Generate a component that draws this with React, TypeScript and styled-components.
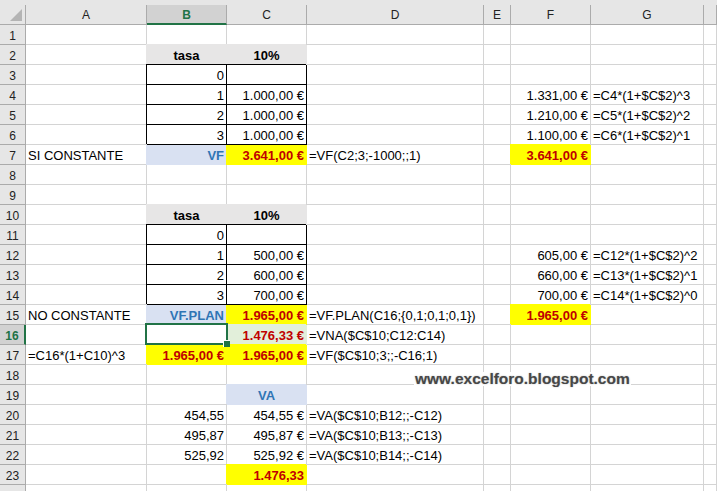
import React from 'react';
import styled, { createGlobalStyle } from 'styled-components';

const GlobalStyle = createGlobalStyle`
  html, body { margin: 0; padding: 0; overflow: hidden; background: #fff; }
  body { font-family: "Liberation Sans", Arial, sans-serif; }
`;

const BLUE = '#2f75b5';
const RED = '#c00000';
const YEL = '#ffff00';
const LB = '#d9e1f2';
const GR = '#e7e6e6';
const GN = '#e2efda';
const GREEN = '#217346';
const GRID = '#d4d4d4';
const HEAD_LINE = '#ababab';

type Col = 'A' | 'B' | 'C' | 'D' | 'E' | 'F' | 'G' | 'H';
const COLS: Col[] = ['A', 'B', 'C', 'D', 'E', 'F', 'G', 'H'];

type CellDef = {
  t: string;
  a?: 'left' | 'center' | 'right';
  b?: boolean;
  c?: string;
  bg?: string;
  box?: boolean;
};

const num = (t: string, box = false): CellDef => ({ t, a: 'right', box });
const txt = (t: string): CellDef => ({ t });
const hot = (t: string, bg: string): CellDef => ({ t, a: 'right', b: true, c: RED, bg });
const label = (t: string, a: 'right' | 'center' = 'right'): CellDef => ({ t, a, b: true, c: BLUE, bg: LB });
const head = (t: string): CellDef => ({ t, a: 'center', b: true, bg: GR });

const DATA: Record<number, Partial<Record<Col, CellDef>>> = {
  2: { B: head('tasa'), C: head('10%') },
  3: { B: num('0', true), C: num('', true) },
  4: { B: num('1', true), C: num('1.000,00 €', true), F: num('1.331,00 €'), G: txt('=C4*(1+$C$2)^3') },
  5: { B: num('2', true), C: num('1.000,00 €', true), F: num('1.210,00 €'), G: txt('=C5*(1+$C$2)^2') },
  6: { B: num('3', true), C: num('1.000,00 €', true), F: num('1.100,00 €'), G: txt('=C6*(1+$C$2)^1') },
  7: {
    A: txt('SI CONSTANTE'),
    B: label('VF'),
    C: hot('3.641,00 €', YEL),
    D: txt('=VF(C2;3;-1000;;1)'),
    F: hot('3.641,00 €', YEL),
  },
  10: { B: head('tasa'), C: head('10%') },
  11: { B: num('0', true), C: num('', true) },
  12: { B: num('1', true), C: num('500,00 €', true), F: num('605,00 €'), G: txt('=C12*(1+$C$2)^2') },
  13: { B: num('2', true), C: num('600,00 €', true), F: num('660,00 €'), G: txt('=C13*(1+$C$2)^1') },
  14: { B: num('3', true), C: num('700,00 €', true), F: num('700,00 €'), G: txt('=C14*(1+$C$2)^0') },
  15: {
    A: txt('NO CONSTANTE'),
    B: label('VF.PLAN'),
    C: hot('1.965,00 €', YEL),
    D: txt('=VF.PLAN(C16;{0,1;0,1;0,1})'),
    F: hot('1.965,00 €', YEL),
  },
  16: { C: hot('1.476,33 €', GN), D: txt('=VNA($C$10;C12:C14)') },
  17: {
    A: txt('=C16*(1+C10)^3'),
    B: hot('1.965,00 €', YEL),
    C: hot('1.965,00 €', YEL),
    D: txt('=VF($C$10;3;;-C16;1)'),
  },
  19: { C: label('VA', 'center') },
  20: { B: num('454,55'), C: num('454,55 €'), D: txt('=VA($C$10;B12;;-C12)') },
  21: { B: num('495,87'), C: num('495,87 €'), D: txt('=VA($C$10;B13;;-C13)') },
  22: { B: num('525,92'), C: num('525,92 €'), D: txt('=VA($C$10;B14;;-C14)') },
  23: { C: hot('1.476,33', YEL) },
};

const ACTIVE_ROW = 16;
const ACTIVE_COL: Col = 'B';
const LAST_FULL_ROW = 23;

const Sheet = styled.div`
  position: relative;
  display: grid;
  grid-template-columns: 26px 121px 80px 80px 177px 27px 80px 113px 1fr;
  grid-template-rows: 5px 20px repeat(24, 20px);
  width: 717px;
  height: 491px;
  overflow: hidden;
  background: #fff;
`;

const TopStrip = styled.div`
  grid-column: 1 / -1;
  background: #e6e6e6;
`;

const Corner = styled.div`
  box-sizing: border-box;
  background: #e6e6e6;
  border-right: 1px solid ${HEAD_LINE};
  border-bottom: 1px solid ${HEAD_LINE};
  display: flex;
  align-items: flex-end;
  justify-content: flex-end;
  padding: 0 3px 3px 0;
`;

const ColHeader = styled.div<{ $active?: boolean }>`
  box-sizing: border-box;
  background: ${p => (p.$active ? '#d2d2d2' : '#e6e6e6')};
  border-right: 1px solid ${HEAD_LINE};
  border-bottom: ${p => (p.$active ? `2px solid ${GREEN}` : `1px solid ${HEAD_LINE}`)};
  color: ${p => (p.$active ? GREEN : '#222')};
  font-weight: ${p => (p.$active ? 700 : 400)};
  font-size: 12px;
  display: flex;
  align-items: center;
  justify-content: center;
  padding-top: 1px;
`;

const RowHeader = styled.div<{ $active?: boolean }>`
  box-sizing: border-box;
  background: ${p => (p.$active ? '#d2d2d2' : '#e6e6e6')};
  border-right: ${p => (p.$active ? `2px solid ${GREEN}` : `1px solid ${HEAD_LINE}`)};
  border-bottom: 1px solid ${HEAD_LINE};
  color: ${p => (p.$active ? GREEN : '#222')};
  font-weight: ${p => (p.$active ? 700 : 400)};
  font-size: 12px;
  display: flex;
  align-items: center;
  justify-content: center;
  padding-top: 2px;
`;

const Cell = styled.div<{
  $align: string;
  $bold?: boolean;
  $color?: string;
  $bg?: string;
  $boxed?: boolean;
  $shadow?: string;
}>`
  position: ${p => (p.$shadow === 'sel' ? 'relative' : 'static')};
  box-sizing: border-box;
  min-width: 0;
  background: ${p => p.$bg ?? '#fff'};
  border-right: 1px solid ${p => (p.$boxed ? '#000' : p.$bg ? 'transparent' : GRID)};
  border-bottom: 1px solid ${p => (p.$boxed ? '#000' : p.$bg ? 'transparent' : GRID)};
  box-shadow: ${p => (p.$shadow && p.$shadow !== 'sel' ? p.$shadow : 'none')};
  padding: 1px 2px 0 2px;
  font-size: 13px;
  line-height: 19px;
  white-space: nowrap;
  text-align: ${p => p.$align};
  font-weight: ${p => (p.$bold ? 700 : 400)};
  color: ${p => p.$color ?? '#000'};
`;

const Selection = styled.div`
  position: absolute;
  left: -2px;
  top: -2px;
  width: 83px;
  height: 22px;
  box-sizing: border-box;
  border: 2px solid ${GREEN};
  pointer-events: none;
`;

const FillHandle = styled.div`
  position: absolute;
  left: 76px;
  top: 15px;
  width: 7px;
  height: 7px;
  box-sizing: border-box;
  background: ${GREEN};
  border-left: 1px solid #fff;
  border-top: 1px solid #fff;
`;

const Watermark = styled.div`
  position: absolute;
  left: 414px;
  top: 372px;
  height: 14px;
  padding: 0 1px;
  background: #fff;
  font-family: "Liberation Sans", Arial, sans-serif;
  font-weight: 700;
  font-size: 15.5px;
  line-height: 14px;
  color: #474747;
  text-shadow: 0 0 1.5px rgba(0, 0, 0, 0.35);
  white-space: nowrap;
`;

const CornerMark = () => (
  <svg width="12" height="12" viewBox="0 0 12 12">
    <polygon points="12,0 12,12 0,12" fill="#b4b4b4" />
  </svg>
);

export default function App() {
  const rows = Array.from({ length: 24 }, (_, i) => i + 1);
  return (
    <>
      <GlobalStyle />
      <Sheet>
        <TopStrip />
        <Corner>
          <CornerMark />
        </Corner>
        {COLS.map(c => (
          <ColHeader key={c} $active={c === ACTIVE_COL}>
            {c === 'H' ? '' : c}
          </ColHeader>
        ))}
        {rows.map(r => (
          <React.Fragment key={r}>
            <RowHeader $active={r === ACTIVE_ROW}>{r <= LAST_FULL_ROW ? r : ''}</RowHeader>
            {COLS.map(c => {
              const d = DATA[r]?.[c];
              const above = DATA[r - 1]?.[c];
              const isSel = r === ACTIVE_ROW && c === ACTIVE_COL;
              let shadow: string | undefined;
              if (isSel) shadow = 'sel';
              else if (d?.box) shadow = '-1px -1px 0 0 #000';
              else if (d?.bg) shadow = above?.box ? `-1px 0 0 0 ${d.bg}` : `-1px -1px 0 0 ${d.bg}`;
              return (
                <Cell
                  key={c}
                  $align={d?.a ?? 'left'}
                  $bold={d?.b}
                  $color={d?.c}
                  $bg={d?.bg}
                  $boxed={d?.box}
                  $shadow={shadow}
                >
                  {d?.t}
                  {isSel && (
                    <>
                      <Selection />
                      <FillHandle />
                    </>
                  )}
                </Cell>
              );
            })}
          </React.Fragment>
        ))}
        <Watermark>www.excelforo.blogspot.com</Watermark>
      </Sheet>
    </>
  );
}
